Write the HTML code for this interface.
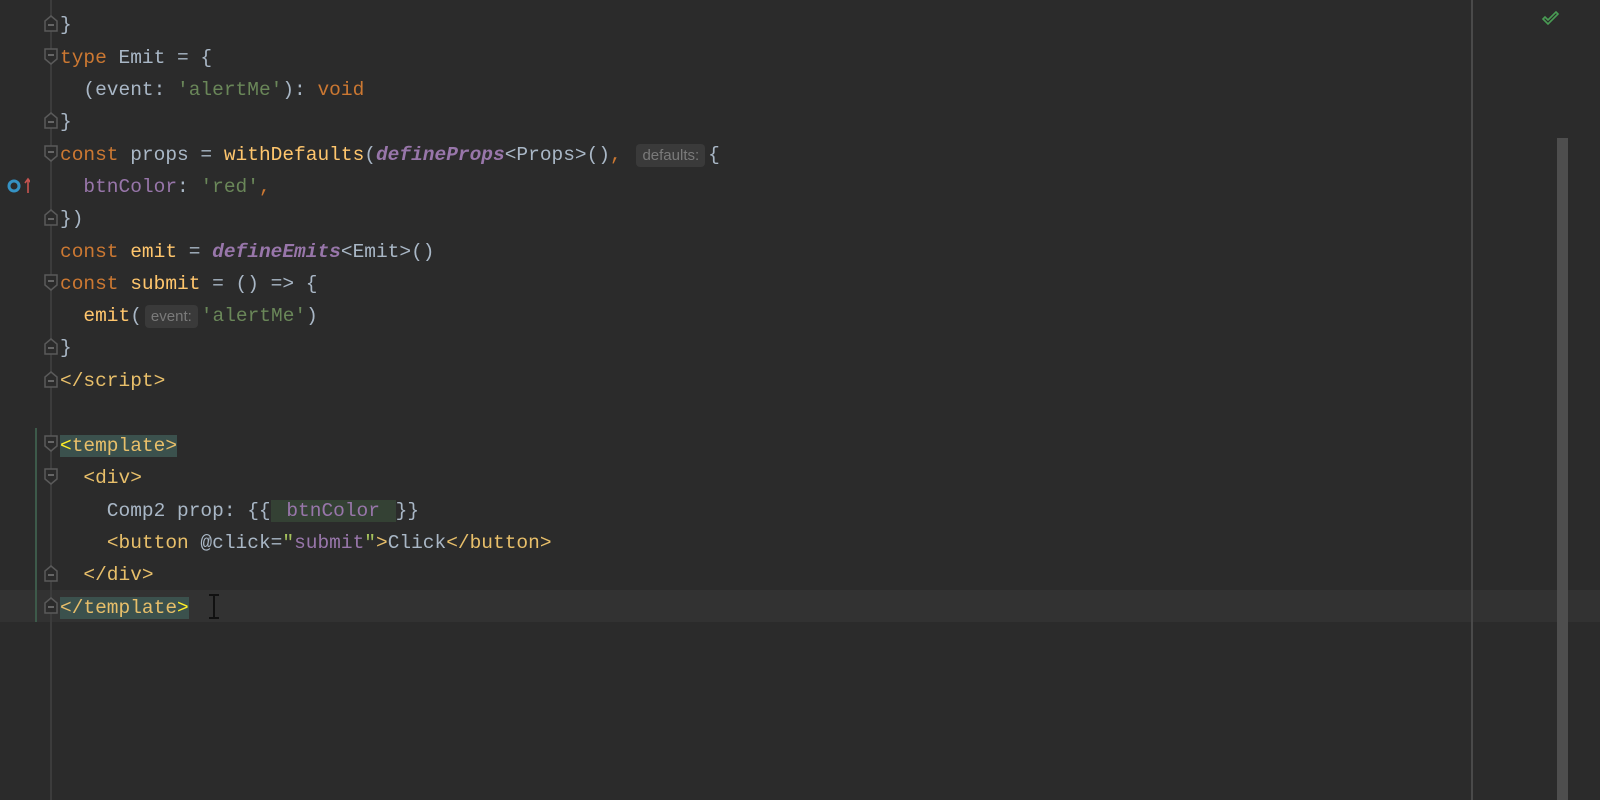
<!DOCTYPE html>
<html><head><meta charset="utf-8"><style>
html,body{margin:0;padding:0;background:#2b2b2b;width:1600px;height:800px;overflow:hidden;position:relative}
.l{position:absolute;left:60px;height:32px;line-height:32px;font-family:"Liberation Mono",monospace;font-size:19.5px;color:#a9b7c6;white-space:pre;margin-top:2px}
.k{color:#cc7832}.s{color:#6a8759}.p{color:#9876aa}.pi{color:#9876aa;font-style:italic;font-weight:bold}.f{color:#ffc66d}.t{color:#e8bf6a}
.h{font-family:"Liberation Sans",sans-serif;font-size:15px;color:#7a7a7a;background:#3a3a3a;border-radius:4px;padding:3px 6px;margin:0 3px}
.tg{background:#3b514d}
.g{position:absolute;left:43px}
</style></head><body>
<div style="position:absolute;left:0;top:590px;width:1600px;height:32px;background:#323232"></div>
<div style="position:absolute;left:50px;top:0;width:2px;height:800px;background:#3c3c3c"></div>
<div style="position:absolute;left:35px;top:428px;width:2px;height:194px;background:#3d5a4a"></div>
<div style="position:absolute;left:1471px;top:0;width:2px;height:800px;background:#4a4a4a"></div>
<div style="position:absolute;left:1557px;top:138px;width:11px;height:662px;background:#4e4e4e"></div>
<svg style="position:absolute;left:1541px;top:11px" width="20" height="16"><path d="M2 8 L7 13 L17 3 L15 1 L7 9 L4 6 Z" fill="none" stroke="#499c54" stroke-width="1.6"/></svg>
<svg style="position:absolute;left:6px;top:177px" width="24" height="18"><circle cx="8" cy="9" r="5" fill="none" stroke="#3592c4" stroke-width="3"/><path d="M22 16 V3 M19 6 L22 2 L25 6" stroke="#c75450" stroke-width="1.6" fill="none"/></svg>

<svg class="g" style="top:14px" width="16" height="18"><path d="M2 17 V7 L8 2 L14 7 V17 Z" fill="#2b2b2b" stroke="#5a5a5a" stroke-width="1.5"/><path d="M5 11 H11" stroke="#7a7a7a" stroke-width="1.5"/></svg>
<svg class="g" style="top:48px" width="16" height="18"><path d="M2 1 V11 L8 16 L14 11 V1 Z" fill="#2b2b2b" stroke="#5a5a5a" stroke-width="1.5"/><path d="M5 7 H11" stroke="#7a7a7a" stroke-width="1.5"/></svg>
<svg class="g" style="top:111px" width="16" height="18"><path d="M2 17 V7 L8 2 L14 7 V17 Z" fill="#2b2b2b" stroke="#5a5a5a" stroke-width="1.5"/><path d="M5 11 H11" stroke="#7a7a7a" stroke-width="1.5"/></svg>
<svg class="g" style="top:145px" width="16" height="18"><path d="M2 1 V11 L8 16 L14 11 V1 Z" fill="#2b2b2b" stroke="#5a5a5a" stroke-width="1.5"/><path d="M5 7 H11" stroke="#7a7a7a" stroke-width="1.5"/></svg>
<svg class="g" style="top:208px" width="16" height="18"><path d="M2 17 V7 L8 2 L14 7 V17 Z" fill="#2b2b2b" stroke="#5a5a5a" stroke-width="1.5"/><path d="M5 11 H11" stroke="#7a7a7a" stroke-width="1.5"/></svg>
<svg class="g" style="top:274px" width="16" height="18"><path d="M2 1 V11 L8 16 L14 11 V1 Z" fill="#2b2b2b" stroke="#5a5a5a" stroke-width="1.5"/><path d="M5 7 H11" stroke="#7a7a7a" stroke-width="1.5"/></svg>
<svg class="g" style="top:337px" width="16" height="18"><path d="M2 17 V7 L8 2 L14 7 V17 Z" fill="#2b2b2b" stroke="#5a5a5a" stroke-width="1.5"/><path d="M5 11 H11" stroke="#7a7a7a" stroke-width="1.5"/></svg>
<svg class="g" style="top:370px" width="16" height="18"><path d="M2 17 V7 L8 2 L14 7 V17 Z" fill="#2b2b2b" stroke="#5a5a5a" stroke-width="1.5"/><path d="M5 11 H11" stroke="#7a7a7a" stroke-width="1.5"/></svg>
<svg class="g" style="top:435px" width="16" height="18"><path d="M2 1 V11 L8 16 L14 11 V1 Z" fill="#2b2b2b" stroke="#5a5a5a" stroke-width="1.5"/><path d="M5 7 H11" stroke="#7a7a7a" stroke-width="1.5"/></svg>
<svg class="g" style="top:468px" width="16" height="18"><path d="M2 1 V11 L8 16 L14 11 V1 Z" fill="#2b2b2b" stroke="#5a5a5a" stroke-width="1.5"/><path d="M5 7 H11" stroke="#7a7a7a" stroke-width="1.5"/></svg>
<svg class="g" style="top:564px" width="16" height="18"><path d="M2 17 V7 L8 2 L14 7 V17 Z" fill="#2b2b2b" stroke="#5a5a5a" stroke-width="1.5"/><path d="M5 11 H11" stroke="#7a7a7a" stroke-width="1.5"/></svg>
<svg class="g" style="top:596px" width="16" height="18"><path d="M2 17 V7 L8 2 L14 7 V17 Z" fill="#2b2b2b" stroke="#5a5a5a" stroke-width="1.5"/><path d="M5 11 H11" stroke="#7a7a7a" stroke-width="1.5"/></svg>

<div class="l" style="top:7px">}</div>
<div class="l" style="top:40px"><span class="k">type</span> Emit = {</div>
<div class="l" style="top:72px">  (event: <span class="s">'alertMe'</span>): <span class="k">void</span></div>
<div class="l" style="top:104px">}</div>
<div class="l" style="top:137px"><span class="k">const</span> props = <span class="f">withDefaults</span>(<span class="pi">defineProps</span>&lt;Props&gt;()<span class="k">,</span> <span class="h">defaults:</span>{</div>
<div class="l" style="top:169px">  <span class="p">btnColor</span>: <span class="s">'red'</span><span class="k">,</span></div>
<div class="l" style="top:201px">})</div>
<div class="l" style="top:234px"><span class="k">const</span> <span class="f">emit</span> = <span class="pi">defineEmits</span>&lt;Emit&gt;()</div>
<div class="l" style="top:266px"><span class="k">const</span> <span class="f">submit</span> = () =&gt; {</div>
<div class="l" style="top:298px">  <span class="f">emit</span>(<span class="h">event:</span><span class="s">'alertMe'</span>)</div>
<div class="l" style="top:330px">}</div>
<div class="l" style="top:363px"><span class="t">&lt;/script&gt;</span></div>
<div class="l" style="top:428px"><span class="t tg"><span style="color:#ffef28">&lt;</span>template&gt;</span></div>
<div class="l" style="top:460px">  <span class="t">&lt;div&gt;</span></div>
<div class="l" style="top:493px">    Comp2 prop: {{<span style="background:#344134;padding:0 4px"> <span class="p">btnColor</span> </span>}}</div>
<div class="l" style="top:525px">    <span class="t">&lt;button</span> @click=<span class="s" style="color:#a5c25c">"</span><span class="p">submit</span><span class="s" style="color:#a5c25c">"</span><span class="t">&gt;</span>Click<span class="t">&lt;/button&gt;</span></div>
<div class="l" style="top:557px">  <span class="t">&lt;/div&gt;</span></div>
<div class="l" style="top:590px"><span class="t tg">&lt;/template<span style="color:#ffef28">&gt;</span></span></div>
<svg style="position:absolute;left:207px;top:594px" width="14" height="26"><path d="M2 1 H12 M7 1 V24 M2 24 H12" stroke="#111" stroke-width="2"/></svg>
</body></html>
